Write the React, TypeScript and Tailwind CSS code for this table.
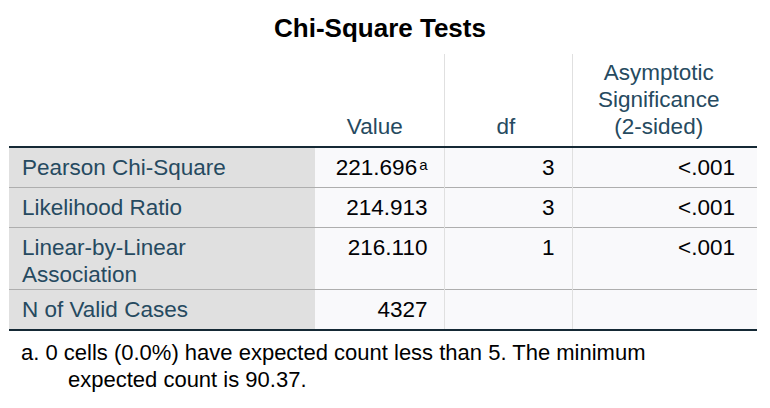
import React from "react";

const font = { fontFamily: '"Liberation Sans", Arial, sans-serif' };

type Row = { label: string[]; value: string; sup?: string; df: string; sig: string };

const rows: Row[] = [
  { label: ["Pearson Chi-Square"], value: "221.696", sup: "a", df: "3", sig: "<.001" },
  { label: ["Likelihood Ratio"], value: "214.913", df: "3", sig: "<.001" },
  { label: ["Linear-by-Linear", "Association"], value: "216.110", df: "1", sig: "<.001" },
  { label: ["N of Valid Cases"], value: "4327", df: "", sig: "" },
];

export default function App() {
  return (
    <div className="w-[770px] h-[408px] bg-white overflow-hidden" style={font}>
      <div className="w-[748px] ml-[9px]">
        <div className="h-[54px] pt-[13px] text-center text-[26px] leading-[30px] font-bold text-black pr-[6px]">
          Chi-Square Tests
        </div>
        <table className="w-[748px] border-collapse table-fixed text-[22.5px] leading-[27px]">
          <colgroup>
            <col className="w-[306px]" />
            <col className="w-[129px]" />
            <col className="w-[128px]" />
            <col className="w-[185px]" />
          </colgroup>
          <thead>
            <tr className="border-b-2 border-[#152935] text-[#264a60]">
              <th className="bg-white font-normal"></th>
              <th className="bg-white font-normal align-bottom text-center pb-[6px] pr-[9px]">Value</th>
              <th className="bg-white font-normal align-bottom text-center pb-[6px] pr-[4px] border-l border-[#e0e0e0]">df</th>
              <th className="bg-white font-normal align-bottom text-center pt-[5px] pb-[6px] pr-[12px] border-l border-[#e0e0e0]">
                Asymptotic
                <br />
                Significance
                <br />
                (2-sided)
              </th>
            </tr>
          </thead>
          <tbody>
            {rows.map((r, i) => {
              const pad = r.label.length > 1 ? "pt-[6px] pb-[1px]" : "py-[6px]";
              return (
                <tr
                  key={i}
                  className={
                    i === rows.length - 1
                      ? "border-t border-[#aeaeae] border-b-2 border-b-[#152935]"
                      : "border-t border-[#aeaeae]"
                  }
                >
                  <td className={`bg-[#e0e0e0] text-[#264a60] align-top pl-[13px] ${pad}`}>
                    {r.label.map((l, j) => (
                      <div key={j}>{l}</div>
                    ))}
                  </td>
                  <td className={`bg-[#f9f9fb] text-[#010205] align-top text-right pr-[16px] ${pad}`}>
                    {r.value}
                    {r.sup && (
                      <span className="inline-block align-top text-[15px] leading-none ml-[2px] mt-[3px]">{r.sup}</span>
                    )}
                  </td>
                  <td className={`bg-[#f9f9fb] text-[#010205] align-top text-right pr-[17px] border-l border-[#e0e0e0] ${pad}`}>
                    {r.df}
                  </td>
                  <td className={`bg-[#f9f9fb] text-[#010205] align-top text-right pr-[22px] border-l border-[#e0e0e0] ${pad}`}>
                    {r.sig}
                  </td>
                </tr>
              );
            })}
          </tbody>
        </table>
        <div className="mt-[8px] pl-[59px] -indent-[47px] pr-[30px] text-[22px] leading-[27px] text-black">
          a. 0 cells (0.0%) have expected count less than 5. The minimum expected count is 90.37.
        </div>
      </div>
    </div>
  );
}
